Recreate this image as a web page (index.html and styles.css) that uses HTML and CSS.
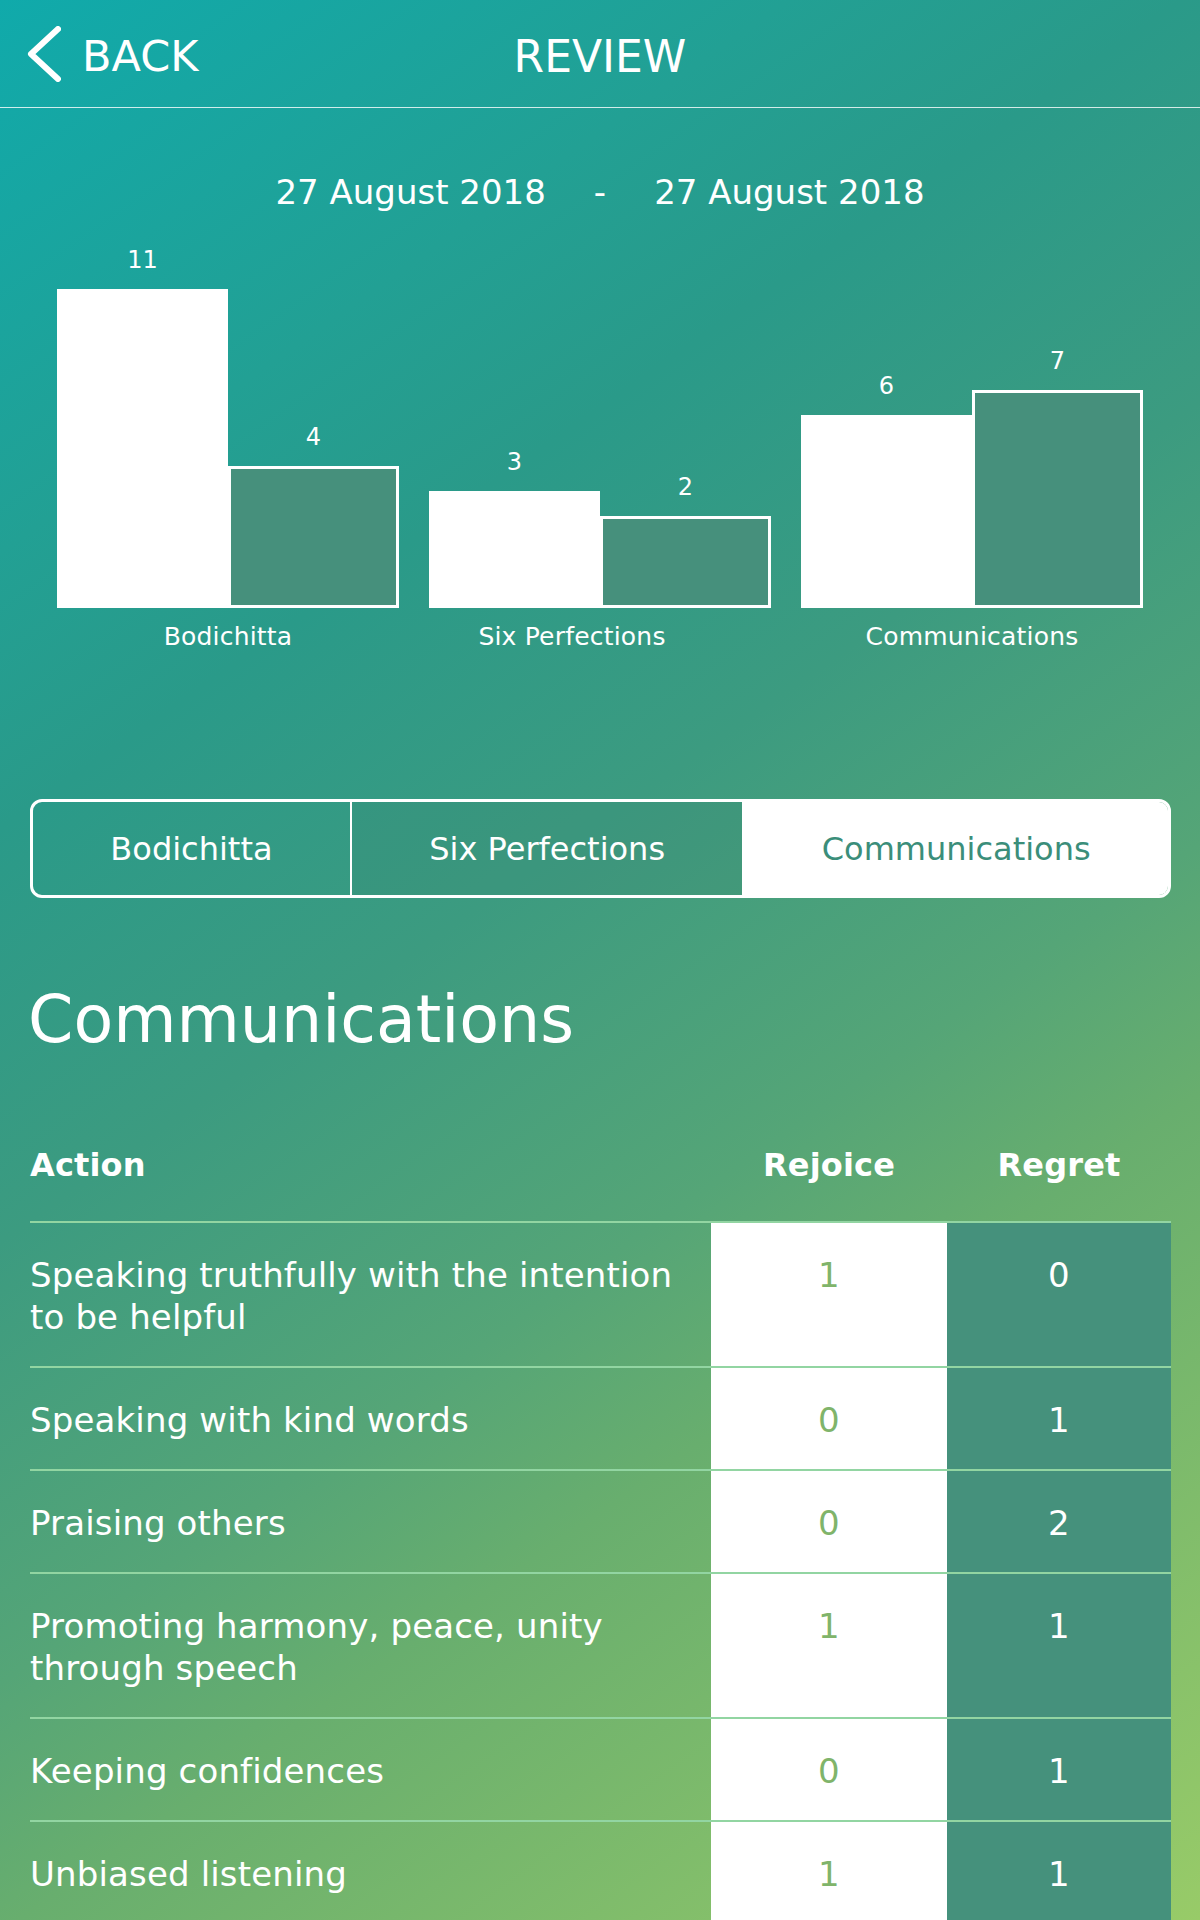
FILE: index.html
```html
<!DOCTYPE html>
<html lang="en">
<head>
<meta charset="utf-8">
<title>Review</title>
<link rel="stylesheet" href="styles.css">
</head>
<body>
<div class="page">
  <header class="topbar">
    <a class="back">
      <svg class="chev" width="34" height="56" viewBox="0 0 34 56" aria-hidden="true"><polyline points="31,3 4,28 31,53"/></svg>
      <span>BACK</span>
    </a>
    <h1 class="title">REVIEW</h1>
    <span></span>
  </header>

  <div class="dates"><span>27 August 2018</span><span>-</span><span>27 August 2018</span></div>

  <div class="chart">
    <div class="group">
      <div class="bars">
        <div class="col"><span class="val">11</span><div class="bar rejoice" style="height:319px"></div></div>
        <div class="col"><span class="val">4</span><div class="bar regret" style="height:142px"></div></div>
      </div>
      <div class="cat">Bodichitta</div>
    </div>
    <div class="group">
      <div class="bars">
        <div class="col"><span class="val">3</span><div class="bar rejoice" style="height:117px"></div></div>
        <div class="col"><span class="val">2</span><div class="bar regret" style="height:92px"></div></div>
      </div>
      <div class="cat cat-left">Six Perfections</div>
    </div>
    <div class="group">
      <div class="bars">
        <div class="col"><span class="val">6</span><div class="bar rejoice" style="height:193px"></div></div>
        <div class="col"><span class="val">7</span><div class="bar regret" style="height:218px"></div></div>
      </div>
      <div class="cat">Communications</div>
    </div>
  </div>

  <div class="tabs">
    <div class="tab">Bodichitta</div>
    <div class="tab tinted">Six Perfections</div>
    <div class="tab active">Communications</div>
  </div>

  <h2 class="heading">Communications</h2>

  <div class="table">
    <div class="row head">
      <div class="c action">Action</div>
      <div class="c num">Rejoice</div>
      <div class="c num">Regret</div>
    </div>
    <div class="row">
      <div class="c action">Speaking truthfully with the intention to be helpful</div>
      <div class="c num rj">1</div>
      <div class="c num rg">0</div>
    </div>
    <div class="row">
      <div class="c action">Speaking with kind words</div>
      <div class="c num rj">0</div>
      <div class="c num rg">1</div>
    </div>
    <div class="row">
      <div class="c action">Praising others</div>
      <div class="c num rj">0</div>
      <div class="c num rg">2</div>
    </div>
    <div class="row">
      <div class="c action">Promoting harmony, peace, unity through speech</div>
      <div class="c num rj">1</div>
      <div class="c num rg">1</div>
    </div>
    <div class="row">
      <div class="c action">Keeping confidences</div>
      <div class="c num rj">0</div>
      <div class="c num rg">1</div>
    </div>
    <div class="row">
      <div class="c action">Unbiased listening</div>
      <div class="c num rj">1</div>
      <div class="c num rg">1</div>
    </div>
  </div>
</div>
</body>
</html>
```
FILE: styles.css
```css
html, body {
  margin: 0;
  padding: 0;
}

body {
  font-family: "DejaVu Sans", "Noto Sans", sans-serif;
  color: #fff;
}

.page {
  width: 1200px;
  height: 1920px;
  overflow: hidden;
  background: linear-gradient(145deg,
    #10aaab 0%,
    #22a094 20%,
    #2a9a89 30%,
    #3c9b80 45%,
    #55a577 61%,
    #68ae6e 70%,
    #98cb68 100%);
}

/* ---------- top bar ---------- */
.topbar {
  height: 101px;
  padding: 6px 0 0 27px;
  border-bottom: 1px solid rgba(255, 255, 255, 0.8);
  display: grid;
  grid-template-columns: 1fr auto 1fr;
  align-items: center;
}

.back {
  display: flex;
  align-items: center;
  gap: 21px;
  font-size: 43px;
  line-height: 43px;
  color: #fff;
  text-decoration: none;
}

.chev {
  margin-bottom: 5px;
}

.chev polyline {
  fill: none;
  stroke: #fff;
  stroke-width: 6;
  stroke-linecap: round;
  stroke-linejoin: round;
}

.title {
  margin: 0 0 0 -27px;
  font-size: 44px;
  line-height: 44px;
  font-weight: normal;
}

/* ---------- dates ---------- */
.dates {
  margin-top: 64px;
  display: flex;
  justify-content: center;
  gap: 48px;
  font-size: 34px;
  line-height: 40px;
}

/* ---------- chart ---------- */
.chart {
  margin-top: 34px;
  padding: 0 57px;
  display: flex;
  gap: 30px;
}

.group {
  width: 342px;
  display: flex;
  flex-direction: column;
}

.bars {
  height: 362px;
  display: flex;
  align-items: flex-end;
}

.col {
  width: 171px;
  display: flex;
  flex-direction: column;
}

.val {
  text-align: center;
  font-size: 24px;
  line-height: 28px;
  margin-bottom: 15px;
}

.bar {
  box-sizing: border-box;
}

.bar.rejoice {
  background: #fff;
}

.bar.regret {
  background: #46907c;
  border: 3px solid #fff;
}

.cat {
  margin-top: 14px;
  text-align: center;
  font-size: 25px;
  line-height: 30px;
  letter-spacing: 0.2px;
}

.cat.cat-left {
  padding-right: 56px;
}

/* ---------- tabs ---------- */
.tabs {
  margin: 147px 29px 0 30px;
  height: 99px;
  box-sizing: border-box;
  border: 3px solid #fff;
  border-radius: 12px;
  overflow: hidden;
  display: flex;
}

.tab {
  flex: 1 1 auto;
  display: flex;
  align-items: center;
  justify-content: center;
  font-size: 32px;
  line-height: 32px;
}

.tab + .tab {
  border-left: 2px solid #fff;
}

.tab.tinted {
  background: rgba(58, 130, 115, 0.22);
}

.tab.active {
  background: #fff;
  color: #3b8e7a;
}

/* ---------- heading ---------- */
.heading {
  margin: 84px 0 0 28px;
  font-size: 65px;
  line-height: 76px;
  font-weight: normal;
}

/* ---------- table ---------- */
.table {
  margin: 87px 29px 0 30px;
}

.row {
  display: grid;
  grid-template-columns: 681px 236px 224px;
  border-bottom: 2px solid #92d5a2;
}

.c {
  padding: 31px 0 28px;
  font-size: 34px;
  line-height: 42px;
  letter-spacing: 0.15px;
}

.row.head .c {
  padding: 0 0 36px;
  font-size: 32px;
  line-height: 40px;
  font-weight: bold;
}

.num {
  text-align: center;
}

.rj {
  background: #fff;
  color: #80b46a;
}

.rg {
  background: #45917c;
  color: #fff;
}
```
